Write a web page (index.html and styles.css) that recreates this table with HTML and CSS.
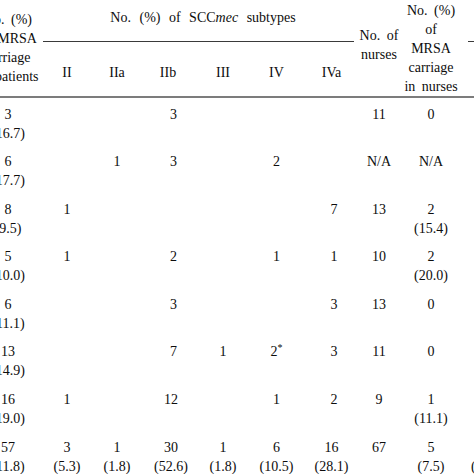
FILE: index.html
```html
<!DOCTYPE html>
<html lang="en">
<head>
<meta charset="utf-8">
<title>SCCmec subtypes table</title>
<link rel="stylesheet" href="styles.css">
</head>
<body>
<div class="tbl">
  <div class="hv h-first">No. (%)<br>of MRSA<br>carriage<br>in patients</div>
  <div class="grp"><div class="grp-line grp-title">No. (%) of SCC<i>mec</i> subtypes</div></div>
  <div class="hv h-nurses"><span class="nur-in">No. of<br>nurses</span></div>
  <div class="hv h-mrsa">No. (%)<br>of<br>MRSA<br>carriage<br>in nurses</div>
  <div class="grp grp-next"><div class="grp-line"></div></div>

  <div class="sub">II</div>
  <div class="sub">IIa</div>
  <div class="sub sub-iib">IIb</div>
  <div class="sub">III</div>
  <div class="sub">IV</div>
  <div class="sub">IVa</div>
  <div class="sub sub-next"></div>

  <!-- row 1 -->
  <div class="c">3<br>(16.7)</div><div class="c"></div><div class="c"></div><div class="c r">3</div><div class="c"></div><div class="c"></div><div class="c"></div><div class="c">11</div><div class="c">0</div><div class="c"></div>
  <!-- row 2 -->
  <div class="c">6<br>(17.7)</div><div class="c"></div><div class="c">1</div><div class="c r">3</div><div class="c"></div><div class="c">2</div><div class="c"></div><div class="c">N/A</div><div class="c">N/A</div><div class="c"></div>
  <!-- row 3 -->
  <div class="c">8<br>(9.5)</div><div class="c">1</div><div class="c"></div><div class="c"></div><div class="c"></div><div class="c"></div><div class="c r">7</div><div class="c">13</div><div class="c">2<br>(15.4)</div><div class="c"></div>
  <!-- row 4 -->
  <div class="c">5<br>(10.0)</div><div class="c">1</div><div class="c"></div><div class="c r">2</div><div class="c"></div><div class="c">1</div><div class="c r">1</div><div class="c">10</div><div class="c">2<br>(20.0)</div><div class="c"></div>
  <!-- row 5 -->
  <div class="c">6<br>(11.1)</div><div class="c"></div><div class="c"></div><div class="c r">3</div><div class="c"></div><div class="c"></div><div class="c r">3</div><div class="c">13</div><div class="c">0</div><div class="c"></div>
  <!-- row 6 -->
  <div class="c">13<br>(14.9)</div><div class="c"></div><div class="c"></div><div class="c r">7</div><div class="c">1</div><div class="c">2<sup class="ast">*</sup></div><div class="c r">3</div><div class="c">11</div><div class="c">0</div><div class="c"></div>
  <!-- row 7 -->
  <div class="c">16<br>(19.0)</div><div class="c">1</div><div class="c"></div><div class="c">12</div><div class="c"></div><div class="c">1</div><div class="c r">2</div><div class="c">9</div><div class="c">1<br>(11.1)</div><div class="c"></div>
  <!-- row 8 -->
  <div class="c">57<br>(11.8)</div><div class="c">3<br>(5.3)</div><div class="c">1<br>(1.8)</div><div class="c">30<br>(52.6)</div><div class="c">1<br>(1.8)</div><div class="c">6<br>(10.5)</div><div class="c">16<br>(28.1)</div><div class="c">67</div><div class="c">5<br>(7.5)</div><div class="c">7<br>(10.4)</div>
</div>
</body>
</html>
```

FILE: styles.css
```css
html, body {
  margin: 0;
  padding: 0;
  background: #ffffff;
  overflow: hidden;
}

.tbl {
  display: grid;
  grid-template-columns: 62px 56px 44px 64px 40px 67px 43px 52px 52px 62px;
  grid-template-rows: 42px 56px repeat(8, 47.6px);
  width: max-content;
  margin-left: -23px;
  font-family: "Liberation Serif", "Times New Roman", serif;
  font-size: 14px;
  line-height: 19px;
  color: #0d0d0d;
  word-spacing: 3px;
  white-space: nowrap;
}

.hv {
  grid-row: 1 / 3;
  display: flex;
  align-items: center;
  justify-content: center;
  text-align: center;
  border-bottom: 2px solid #7c7c7c;
}

.h-first { grid-column: 1; }
.h-nurses { grid-column: 8; }
.h-mrsa { grid-column: 9; }
.nur-in { padding-bottom: 6px; }

.grp {
  grid-row: 1;
  grid-column: 2 / 8;
}

.grp-line {
  margin: 0 -1px 0 4px;
  height: 33px;
  padding-top: 8px;
  text-align: center;
  border-bottom: 1px solid #3a3a3a;
}

.grp-title {
  padding-left: 9px;
  word-spacing: 5px;
}

.grp-next {
  grid-column: 10;
}

.grp-next .grp-line {
  margin-left: 11px;
  margin-right: 0;
}

.sub {
  grid-row: 2;
  display: flex;
  align-items: center;
  justify-content: center;
  padding-top: 6px;
  border-bottom: 2px solid #7c7c7c;
}

.sub-iib { padding-right: 6px; }
.sub-next { grid-column: 10; }

.c {
  padding-top: 6.5px;
  text-align: center;
}

.c.r { padding-left: 5px; }

.ast {
  font-size: 10px;
  line-height: 0;
  vertical-align: 5px;
}
```
